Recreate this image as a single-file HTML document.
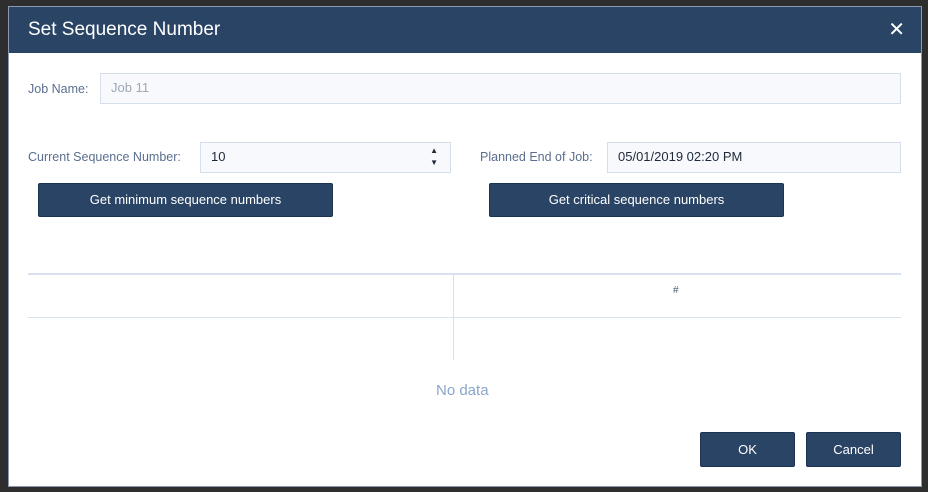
<!DOCTYPE html>
<html><head><style>
body{margin:0;width:928px;height:492px;background:#2e2e2e;font-family:"Liberation Sans",sans-serif;position:relative;overflow:hidden}
.dlg{position:absolute;left:8px;top:6px;width:914px;height:481px;background:#fff;border:1px solid #8a9ab0;box-sizing:border-box}
.hdr{position:absolute;left:0;top:0;right:0;height:46px;background:#2a4466;color:#fff;font-size:19px;line-height:46px;padding-left:19px}
.x{position:absolute;right:16px;top:0;font-size:20px;color:#fff}
.a{position:absolute}
.lbl{font-size:12.5px;color:#5a6f8f}
.inp{border:1px solid #d5dfeb;background:#f7f9fc;box-sizing:border-box;font-size:13px;line-height:28px;padding-left:10px;color:#1e2a3a}
.btn{background:#2a4466;color:#fff;border-radius:2px;font-size:13px;text-align:center;box-sizing:border-box;border:1px solid #1d3352}
</style></head><body>
<div class="dlg">
<div class="hdr">Set Sequence Number<span class="x">✕</span></div>
<div class="a lbl" style="left:19px;top:75px">Job Name:</div>
<div class="a inp" style="left:91px;top:66px;width:801px;height:31px;color:#a0a8b4">Job 11</div>
<div class="a lbl" style="left:19px;top:143px">Current Sequence Number:</div>
<div class="a inp" style="left:191px;top:135px;width:251px;height:31px">10<span style="position:absolute;right:12px;top:2px;font-size:8px;line-height:12px">▲<br>▼</span></div>
<div class="a lbl" style="left:471px;top:143px">Planned End of Job:</div>
<div class="a inp" style="left:598px;top:135px;width:294px;height:31px">05/01/2019 02:20 PM</div>
<div class="a btn" style="left:29px;top:176px;width:295px;height:34px;line-height:32px">Get minimum sequence numbers</div>
<div class="a btn" style="left:480px;top:176px;width:295px;height:34px;line-height:32px">Get critical sequence numbers</div>
<div class="a" style="left:19px;top:266px;width:873px;height:2px;background:#d8e2ef"></div>
<div class="a" style="left:19px;top:310px;width:873px;height:1px;background:#d8e2ef"></div>
<div class="a" style="left:444px;top:267px;width:1px;height:86px;background:#d8e2ef"></div>
<div class="a" style="left:664px;top:278px;font-size:10px;color:#4a5a70">#</div>
<div class="a" style="left:427px;top:375px;font-size:15px;color:#8aa6cc">No data</div>
<div class="a btn" style="left:691px;top:425px;width:95px;height:35px;line-height:33px">OK</div>
<div class="a btn" style="left:797px;top:425px;width:95px;height:35px;line-height:33px">Cancel</div>
</div>
</body></html>
